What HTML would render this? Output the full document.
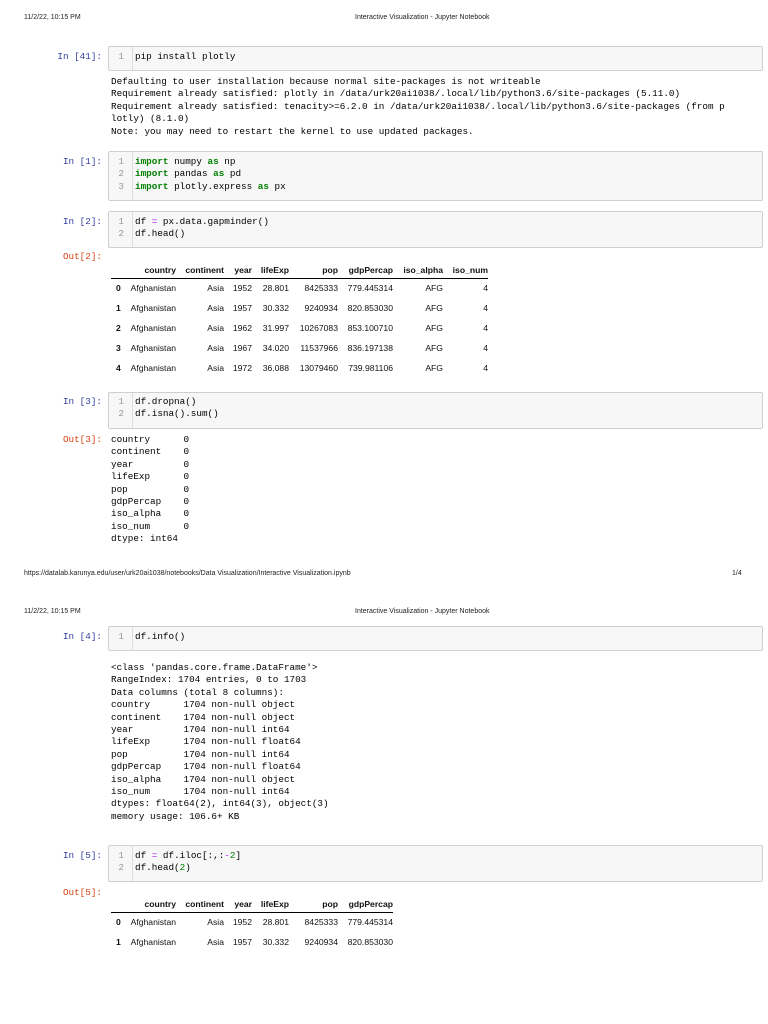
<!DOCTYPE html>
<html><head><meta charset="utf-8"><style>
*{margin:0;padding:0;box-sizing:border-box}
body{width:768px;height:1024px;background:#fff;position:relative;overflow:hidden;font-family:"Liberation Sans",sans-serif;color:#000}
.a{position:absolute;white-space:pre}
.h{font-size:7px;color:#222;line-height:10px}
.m{font-family:"Liberation Mono",monospace;font-size:9.3px;line-height:12.4px;color:#000}
.in{color:#303F9F;text-align:right;width:60px;left:42px}
.out{color:#D84315;text-align:right;width:60px;left:42px}
.box{position:absolute;left:108px;width:655px;background:#f7f7f7;border:1px solid #cfcfcf;border-radius:2px}
.box:before{content:"";position:absolute;left:23px;top:0;bottom:0;border-left:1px solid #ddd}
.ln{color:#999;width:10px;text-align:right;left:114px}
.k{color:#008000;font-weight:bold}
.o{color:#AA22FF}
.n{color:#008000}
table{position:absolute;border-collapse:collapse;font-size:8.6px;left:111px;color:#111}
th{font-weight:bold;text-align:right;padding:0;height:16px;border-bottom:1px solid #000;vertical-align:middle;white-space:nowrap}
td{text-align:right;height:20px;vertical-align:middle;white-space:nowrap}
td.i{font-weight:bold;text-align:left;padding-left:5px}
</style></head><body>
<div class="a h" style="left:24px;top:13px">11/2/22, 10:15 PM</div>
<div class="a h" style="left:355px;top:13px">Interactive Visualization - Jupyter Notebook</div>

<div class="a m in" style="top:51px">In [41]:</div>
<div class="box" style="top:46px;height:25px"></div>
<div class="a m ln" style="top:51px">1</div>
<div class="a m" style="left:135px;top:51px">pip install plotly</div>
<div class="a m" style="left:111px;top:76px">Defaulting to user installation because normal site-packages is not writeable
Requirement already satisfied: plotly in /data/urk20ai1038/.local/lib/python3.6/site-packages (5.11.0)
Requirement already satisfied: tenacity&gt;=6.2.0 in /data/urk20ai1038/.local/lib/python3.6/site-packages (from p
lotly) (8.1.0)
Note: you may need to restart the kernel to use updated packages.</div>

<div class="a m in" style="top:156px">In [1]:</div>
<div class="box" style="top:151px;height:50px"></div>
<div class="a m ln" style="top:156px">1
2
3</div>
<div class="a m" style="left:135px;top:156px"><span class="k">import</span> numpy <span class="k">as</span> np
<span class="k">import</span> pandas <span class="k">as</span> pd
<span class="k">import</span> plotly.express <span class="k">as</span> px</div>

<div class="a m in" style="top:216px">In [2]:</div>
<div class="box" style="top:211px;height:37px"></div>
<div class="a m ln" style="top:216px">1
2</div>
<div class="a m" style="left:135px;top:216px">df <span class="o">=</span> px.data.gapminder()
df.head()</div>
<div class="a m out" style="top:251px">Out[2]:</div>
<table style="top:262px">
<tr><th style="width:14px"></th><th style="width:51px">country</th><th style="width:48px">continent</th><th style="width:28px">year</th><th style="width:37px">lifeExp</th><th style="width:49px">pop</th><th style="width:55px">gdpPercap</th><th style="width:50px">iso_alpha</th><th style="width:45px">iso_num</th></tr>
<tr><td class="i">0</td><td>Afghanistan</td><td>Asia</td><td>1952</td><td>28.801</td><td>8425333</td><td>779.445314</td><td>AFG</td><td>4</td></tr>
<tr><td class="i">1</td><td>Afghanistan</td><td>Asia</td><td>1957</td><td>30.332</td><td>9240934</td><td>820.853030</td><td>AFG</td><td>4</td></tr>
<tr><td class="i">2</td><td>Afghanistan</td><td>Asia</td><td>1962</td><td>31.997</td><td>10267083</td><td>853.100710</td><td>AFG</td><td>4</td></tr>
<tr><td class="i">3</td><td>Afghanistan</td><td>Asia</td><td>1967</td><td>34.020</td><td>11537966</td><td>836.197138</td><td>AFG</td><td>4</td></tr>
<tr><td class="i">4</td><td>Afghanistan</td><td>Asia</td><td>1972</td><td>36.088</td><td>13079460</td><td>739.981106</td><td>AFG</td><td>4</td></tr>
</table>

<div class="a m in" style="top:396px">In [3]:</div>
<div class="box" style="top:392px;height:37px"></div>
<div class="a m ln" style="top:396px">1
2</div>
<div class="a m" style="left:135px;top:396px">df.dropna()
df.isna().sum()</div>
<div class="a m out" style="top:434px">Out[3]:</div>
<div class="a m" style="left:111px;top:434px">country      0
continent    0
year         0
lifeExp      0
pop          0
gdpPercap    0
iso_alpha    0
iso_num      0
dtype: int64</div>

<div class="a h" style="left:24px;top:569px">https://datalab.karunya.edu/user/urk20ai1038/notebooks/Data Visualization/Interactive Visualization.ipynb</div>
<div class="a h" style="left:732px;top:569px">1/4</div>

<div class="a h" style="left:24px;top:607px">11/2/22, 10:15 PM</div>
<div class="a h" style="left:355px;top:607px">Interactive Visualization - Jupyter Notebook</div>

<div class="a m in" style="top:631px">In [4]:</div>
<div class="box" style="top:626px;height:25px"></div>
<div class="a m ln" style="top:631px">1</div>
<div class="a m" style="left:135px;top:631px">df.info()</div>
<div class="a m" style="left:111px;top:662px">&lt;class 'pandas.core.frame.DataFrame'&gt;
RangeIndex: 1704 entries, 0 to 1703
Data columns (total 8 columns):
country      1704 non-null object
continent    1704 non-null object
year         1704 non-null int64
lifeExp      1704 non-null float64
pop          1704 non-null int64
gdpPercap    1704 non-null float64
iso_alpha    1704 non-null object
iso_num      1704 non-null int64
dtypes: float64(2), int64(3), object(3)
memory usage: 106.6+ KB</div>

<div class="a m in" style="top:850px">In [5]:</div>
<div class="box" style="top:845px;height:37px"></div>
<div class="a m ln" style="top:850px">1
2</div>
<div class="a m" style="left:135px;top:850px">df <span class="o">=</span> df.iloc[:,:<span class="o">-</span><span class="n">2</span>]
df.head(<span class="n">2</span>)</div>
<div class="a m out" style="top:887px">Out[5]:</div>
<table style="top:896px">
<tr><th style="width:14px"></th><th style="width:51px">country</th><th style="width:48px">continent</th><th style="width:28px">year</th><th style="width:37px">lifeExp</th><th style="width:49px">pop</th><th style="width:55px">gdpPercap</th></tr>
<tr><td class="i">0</td><td>Afghanistan</td><td>Asia</td><td>1952</td><td>28.801</td><td>8425333</td><td>779.445314</td></tr>
<tr><td class="i">1</td><td>Afghanistan</td><td>Asia</td><td>1957</td><td>30.332</td><td>9240934</td><td>820.853030</td></tr>
</table>
</body></html>
